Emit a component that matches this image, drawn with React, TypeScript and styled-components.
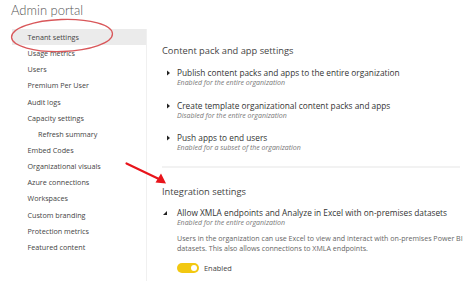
import React from "react";
import styled, { createGlobalStyle } from "styled-components";

const Global = createGlobalStyle`
  html, body { margin: 0; padding: 0; background: #fff; }
  body { font-family: "Open Sans", "Noto Sans", Arial, sans-serif; }
  * { box-sizing: border-box; }
`;

const Page = styled.div`
  position: relative;
  width: 474px;
  height: 281px;
  overflow: hidden;
  display: flex;
  flex-direction: column;
  background: #fff;
`;

const Title = styled.div`
  height: 29px;
  padding-left: 11px;
  padding-top: 1px;
  font-family: "Lato", "Open Sans", sans-serif;
  font-size: 13px;
  font-weight: 300;
  line-height: 18px;
  color: #555;
`;

const Body = styled.div`
  flex: 1;
  display: flex;
`;

const Sidebar = styled.nav`
  width: 147px;
  flex: none;
  padding-left: 12px;
  border-right: 1px solid #f0f0f0;
  display: flex;
  flex-direction: column;
`;

const NavItem = styled.div<{ $active?: boolean; $indent?: boolean }>`
  height: 16.15px;
  line-height: 16.15px;
  font-size: 7.2px;
  color: #444;
  padding-left: ${(p) => (p.$indent ? 26 : 15.5)}px;
  background: ${(p) => (p.$active ? "#ebebeb" : "transparent")};
  white-space: nowrap;
`;

const Main = styled.main`
  flex: 1;
  min-width: 0;
  padding: 0 14px 0 15px;
  display: flex;
  flex-direction: column;
`;

const SectionTitle = styled.div<{ $top: number }>`
  margin-top: ${(p) => p.$top}px;
  font-size: 9.3px;
  line-height: 14px;
  color: #444;
  white-space: nowrap;
`;

const Setting = styled.div<{ $top: number }>`
  margin-top: ${(p) => p.$top}px;
  display: grid;
  grid-template-columns: 15px 1fr;
`;

const Caret = styled.div`
  height: 11px;
  display: flex;
  align-items: center;
  justify-content: flex-start;
  padding-left: 4px;
`;

const SettingTitle = styled.div`
  font-size: 8.3px;
  line-height: 11px;
  color: #333;
  white-space: nowrap;
`;

const SettingStatus = styled.div`
  font-size: 7px;
  line-height: 10px;
  font-style: italic;
  color: #777;
  white-space: nowrap;
`;

const Description = styled.div`
  margin-top: 6px;
  font-size: 7.1px;
  line-height: 9.5px;
  color: #666;
  white-space: nowrap;
`;

const ToggleRow = styled.div`
  margin-top: 10px;
  display: flex;
  align-items: center;
  gap: 5px;
`;

const Toggle = styled.div`
  width: 22px;
  height: 10px;
  border-radius: 5px;
  background: #f2c811;
  position: relative;
  &::after {
    content: "";
    position: absolute;
    right: 2px;
    top: 2px;
    width: 6px;
    height: 6px;
    border-radius: 50%;
    background: #fff;
  }
`;

const ToggleLabel = styled.span`
  font-size: 7.4px;
  color: #444;
`;

const Divider = styled.div`
  margin-top: 13px;
  height: 2px;
  background: #f2f2f2;
`;

const Overlay = styled.svg`
  position: absolute;
  left: 0;
  top: 0;
  pointer-events: none;
`;

const RightCaret = () => (
  <svg width="5" height="6" viewBox="0 0 5 6">
    <path d="M1 0.5 L4 3 L1 5.5 Z" fill="#222" />
  </svg>
);

const DownCaret = () => (
  <svg width="6" height="6" viewBox="0 0 6 6" style={{ marginLeft: -4 }}>
    <path d="M5 1 L5 5 L1 5 Z" fill="#222" />
  </svg>
);

const navItems: { label: string; active?: boolean; indent?: boolean }[] = [
  { label: "Tenant settings", active: true },
  { label: "Usage metrics" },
  { label: "Users" },
  { label: "Premium Per User" },
  { label: "Audit logs" },
  { label: "Capacity settings" },
  { label: "Refresh summary", indent: true },
  { label: "Embed Codes" },
  { label: "Organizational visuals" },
  { label: "Azure connections" },
  { label: "Workspaces" },
  { label: "Custom branding" },
  { label: "Protection metrics" },
  { label: "Featured content" },
];

export default function App() {
  return (
    <Page>
      <Global />
      <Title>Admin portal</Title>
      <Body>
        <Sidebar>
          {navItems.map((n) => (
            <NavItem key={n.label} $active={n.active} $indent={n.indent}>
              {n.label}
            </NavItem>
          ))}
        </Sidebar>
        <Main>
          <SectionTitle $top={15}>Content pack and app settings</SectionTitle>
          <Setting $top={9}>
            <Caret><RightCaret /></Caret>
            <div>
              <SettingTitle>Publish content packs and apps to the entire organization</SettingTitle>
              <SettingStatus>Enabled for the entire organization</SettingStatus>
            </div>
          </Setting>
          <Setting $top={12}>
            <Caret><RightCaret /></Caret>
            <div>
              <SettingTitle>Create template organizational content packs and apps</SettingTitle>
              <SettingStatus>Disabled for the entire organization</SettingStatus>
            </div>
          </Setting>
          <Setting $top={11}>
            <Caret><RightCaret /></Caret>
            <div>
              <SettingTitle>Push apps to end users</SettingTitle>
              <SettingStatus>Enabled for a subset of the organization</SettingStatus>
            </div>
          </Setting>
          <Divider />
          <SectionTitle $top={17}>Integration settings</SectionTitle>
          <Setting $top={8}>
            <Caret><DownCaret /></Caret>
            <div>
              <SettingTitle>Allow XMLA endpoints and Analyze in Excel with on-premises datasets</SettingTitle>
              <SettingStatus>Enabled for the entire organization</SettingStatus>
              <Description>
                Users in the organization can use Excel to view and interact with on-premises Power BI
                <br />
                datasets. This also allows connections to XMLA endpoints.
              </Description>
              <ToggleRow>
                <Toggle />
                <ToggleLabel>Enabled</ToggleLabel>
              </ToggleRow>
            </div>
          </Setting>
        </Main>
      </Body>
      <Overlay width="474" height="281" viewBox="0 0 474 281">
        <ellipse cx="62" cy="35.5" rx="50.5" ry="16" fill="none" stroke="#d9575a" strokeWidth="1.3" transform="rotate(-2 62 35.5)" />
        <line x1="126.5" y1="163.5" x2="160" y2="179.5" stroke="#e8141b" strokeWidth="2.2" strokeLinecap="round" />
        <path d="M166 183.5 L155.5 182.5 L161 173.5 Z" fill="#e8141b" />
      </Overlay>
    </Page>
  );
}
